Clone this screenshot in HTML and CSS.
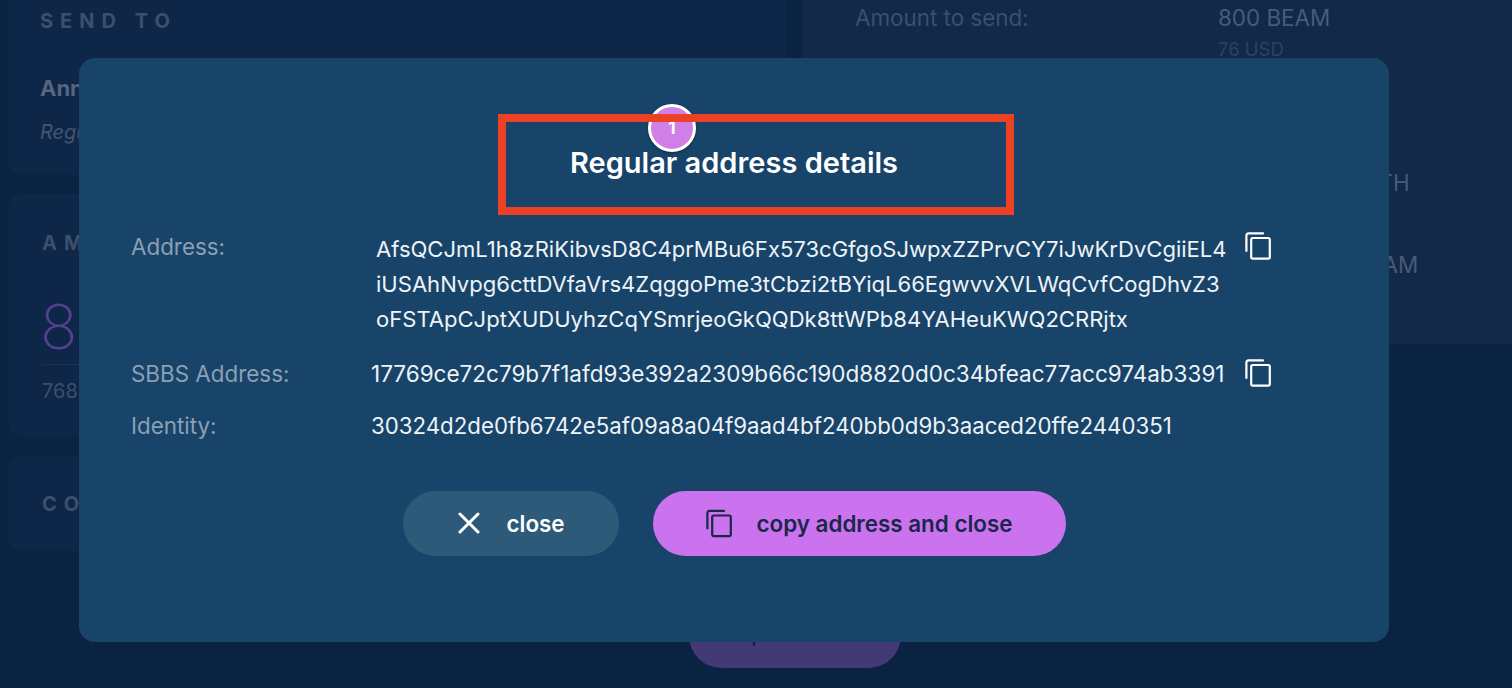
FILE: index.html
```html
<!DOCTYPE html>
<html lang="en">
<head>
    <meta charset="UTF-8">
    <meta name="viewport" content="width=device-width, initial-scale=1.0">
    <title>Regular address details</title>
    <link rel="stylesheet" href="styles.css">
</head>
<body>
    <div class="page">
        <div class="columns">
            <div class="left-column">
                <section class="card card-send">
                    <h2 class="card-title">SEND TO</h2>
                    <div class="contact-name">Anna</div>
                    <div class="contact-type">Regular</div>
                </section>
                <section class="card card-amount">
                    <h2 class="card-title">AMOUNT</h2>
                    <div class="amount-value">800</div>
                    <div class="amount-usd">768 USD</div>
                </section>
                <section class="card card-comment">
                    <h2 class="card-title">COMMENT</h2>
                </section>
            </div>
            <aside class="summary">
                <div class="summary-row">
                    <span class="summary-label">Amount to send:</span>
                    <div>
                        <div class="summary-value">800 BEAM</div>
                        <div class="summary-sub">76 USD</div>
                    </div>
                </div>
                <div class="summary-row summary-fee">
                    <span class="summary-label">Fee:</span>
                    <div class="summary-value">0.000000156 ETH</div>
                </div>
                <div class="summary-row summary-rest">
                    <span class="summary-label">Remaining:</span>
                    <div class="summary-value">1,245.67802 BEAM</div>
                </div>
            </aside>
        </div>
        <div class="footer">
            <button class="send-button" type="button">
                <svg class="send-icon" viewBox="0 0 18 20" fill="none" stroke="currentColor" stroke-width="2.4" stroke-linecap="round" stroke-linejoin="round"><path d="M9 19V2M2 9l7-7 7 7"/></svg>
                send
            </button>
        </div>
    </div>

    <div class="modal">
        <h1 class="modal-title">Regular address details</h1>
        <div class="details">
            <div class="detail-label">Address:</div>
            <div class="detail-value detail-address">AfsQCJmL1h8zRiKibvsD8C4prMBu6Fx573cGfgoSJwpxZZPrvCY7iJwKrDvCgiiEL4<br>iUSAhNvpg6cttDVfaVrs4ZqggoPme3tCbzi2tBYiqL66EgwvvXVLWqCvfCogDhvZ3<br>oFSTApCJptXUDUyhzCqYSmrjeoGkQQDk8ttWPb84YAHeuKWQ2CRRjtx</div>
            <svg class="copy-icon" viewBox="0 0 26 28" fill="none" stroke="currentColor" stroke-width="2.2" stroke-linecap="round" stroke-linejoin="round"><path d="M1.4 19V3.4a2 2 0 0 1 2-2H18"/><rect x="6.2" y="6" width="18.6" height="20.6" rx="1.6"/></svg>

            <div class="detail-label">SBBS Address:</div>
            <div class="detail-value">17769ce72c79b7f1afd93e392a2309b66c190d8820d0c34bfeac77acc974ab3391</div>
            <svg class="copy-icon" viewBox="0 0 26 28" fill="none" stroke="currentColor" stroke-width="2.2" stroke-linecap="round" stroke-linejoin="round"><path d="M1.4 19V3.4a2 2 0 0 1 2-2H18"/><rect x="6.2" y="6" width="18.6" height="20.6" rx="1.6"/></svg>

            <div class="detail-label">Identity:</div>
            <div class="detail-value detail-identity">30324d2de0fb6742e5af09a8a04f9aad4bf240bb0d9b3aaced20ffe2440351</div>
        </div>
        <div class="modal-buttons">
            <button class="button button-close" type="button">
                <svg class="button-icon-close" viewBox="0 0 22 22" fill="none" stroke="currentColor" stroke-width="3" stroke-linecap="round"><path d="M2 2l18 18M20 2L2 20"/></svg>
                close
            </button>
            <button class="button button-copy" type="button">
                <svg class="button-icon-copy" viewBox="0 0 26 28" fill="none" stroke="currentColor" stroke-width="2.2" stroke-linecap="round" stroke-linejoin="round"><path d="M1.4 19V3.4a2 2 0 0 1 2-2H18"/><rect x="6.2" y="6" width="18.6" height="20.6" rx="1.6"/></svg>
                copy address and close
            </button>
        </div>
    </div>

    <div class="step-badge">1</div>
    <div class="highlight"></div>
</body>
</html>
```

FILE: styles.css
```css
html, body {
    height: 100%;
}

body {
    margin: 0;
    overflow: hidden;
    background-color: #0b2342;
    font-family: Inter, "Noto Sans", sans-serif;
}

/* dimmed page behind the dialog */
.page {
    height: 688px;
    display: flex;
    flex-direction: column;
}

.columns {
    display: flex;
    align-items: flex-start;
    padding-left: 8px;
}

.left-column {
    width: 777px;
    display: flex;
    flex-direction: column;
    gap: 19px;
}

.card {
    background-color: #0e2647;
    border-radius: 0 0 14px 14px;
    padding-left: 32px;
    color: #3e4f6b;
}

.card-amount,
.card-comment {
    padding-left: 34px;
    border-radius: 14px;
}

.card-send {
    height: 175px;
}

.card-amount {
    height: 243px;
}

.card-comment {
    height: 95px;
}

.card-title {
    margin: 0;
    font-size: 20px;
    font-weight: 700;
    letter-spacing: 7px;
    line-height: 24px;
}

.card-send .card-title {
    padding-top: 9px;
}

.card-amount .card-title {
    padding-top: 37px;
}

.card-comment .card-title {
    padding-top: 36px;
}

.contact-name {
    margin-top: 42px;
    font-size: 22px;
    font-weight: 700;
    line-height: 26px;
    color: #56667f;
}

.contact-type {
    margin-top: 18px;
    font-size: 20px;
    font-style: italic;
    line-height: 26px;
    color: #45566f;
}

.amount-value {
    margin: 37px 0 0 -2px;
    font-size: 62px;
    font-weight: 200;
    line-height: 70px;
    color: #54408f;
}

.amount-usd {
    margin-top: 2px;
    padding-top: 11px;
    border-top: 1px solid #1a3150;
    font-size: 20px;
    line-height: 30px;
    color: #3e4f6b;
}

.summary {
    flex: 1;
    height: 344px;
    margin-left: 17px;
    padding-left: 53px;
    box-sizing: border-box;
    background-color: #12294a;
    color: #3e4f6b;
}

.summary-row {
    display: flex;
    font-size: 22.4px;
    line-height: 26px;
}

.summary-row:first-child {
    padding-top: 5px;
}

.summary-label {
    width: 363px;
}

.summary-value {
    color: #4a5b76;
    white-space: nowrap;
}

.summary-sub {
    margin-top: 6px;
    font-size: 18.5px;
    line-height: 24px;
    color: #2e4260;
}

.summary-fee {
    margin-top: 109px;
}

.summary-rest {
    margin-top: 56px;
}

.footer {
    display: flex;
    justify-content: center;
    margin-top: 52px;
    padding-left: 78px;
}

.send-button {
    width: 212px;
    height: 65px;
    display: flex;
    align-items: center;
    padding: 0 0 0 56px;
    border: none;
    border-radius: 33px;
    background-color: #433a75;
    color: #0b2342;
    font-family: inherit;
    font-size: 17px;
    font-weight: 600;
}

.send-icon {
    width: 18px;
    height: 20px;
    margin: 0 14px 0 0;
}

/* dialog */
.modal {
    position: absolute;
    top: 58px;
    left: 79px;
    width: 1310px;
    height: 584px;
    box-sizing: border-box;
    padding: 84px 0 0 52px;
    background-color: #18446a;
    border-radius: 16px;
}

.modal-title {
    margin: 0 0 0 -52px;
    font-size: 29px;
    font-weight: 600;
    line-height: 42px;
    text-align: center;
    color: white;
}

.details {
    display: grid;
    grid-template-columns: 240px 874px 26px;
    align-items: start;
    margin-top: 48px;
    row-gap: 22px;
}

.detail-label {
    font-size: 22.4px;
    line-height: 30px;
    color: #8ba0b3;
}

.detail-value {
    font-size: 22.5px;
    line-height: 30px;
    color: #eef3f7;
    white-space: nowrap;
}

.detail-address {
    padding-left: 5px;
    font-size: 22.05px;
    line-height: 35px;
}

.detail-identity {
    font-size: 22.25px;
}

.copy-icon {
    width: 26px;
    height: 28px;
    color: white;
}

.modal-buttons {
    display: flex;
    justify-content: center;
    gap: 34px;
    margin: 50px 0 0 -52px;
}

.button {
    height: 65px;
    display: flex;
    align-items: center;
    padding-bottom: 2px;
    border: none;
    border-radius: 33px;
    font-family: inherit;
    font-size: 22.4px;
    font-weight: 600;
}

.button-close {
    width: 216px;
    padding-left: 55px;
    background-color: #2c5a78;
    color: white;
}

.button-copy {
    width: 413px;
    padding-left: 53px;
    background-color: #cb72ee;
    color: #18284a;
}

.button-icon-close {
    width: 22px;
    height: 22px;
    margin-right: 27px;
}

.button-icon-copy {
    width: 26px;
    height: 29px;
    margin-right: 25px;
}

/* tutorial annotation over the dialog */
.highlight {
    position: absolute;
    top: 114px;
    left: 498px;
    width: 500px;
    height: 85px;
    border: 8px solid #ec4125;
}

.step-badge {
    position: absolute;
    top: 104px;
    left: 648px;
    width: 42px;
    height: 42px;
    border: 3px solid white;
    border-radius: 50%;
    background-color: #d07fe8;
    box-shadow: 0 1px 3px rgba(0, 0, 0, 0.4);
    color: white;
    font-size: 17px;
    font-weight: 700;
    line-height: 42px;
    text-align: center;
}
```
